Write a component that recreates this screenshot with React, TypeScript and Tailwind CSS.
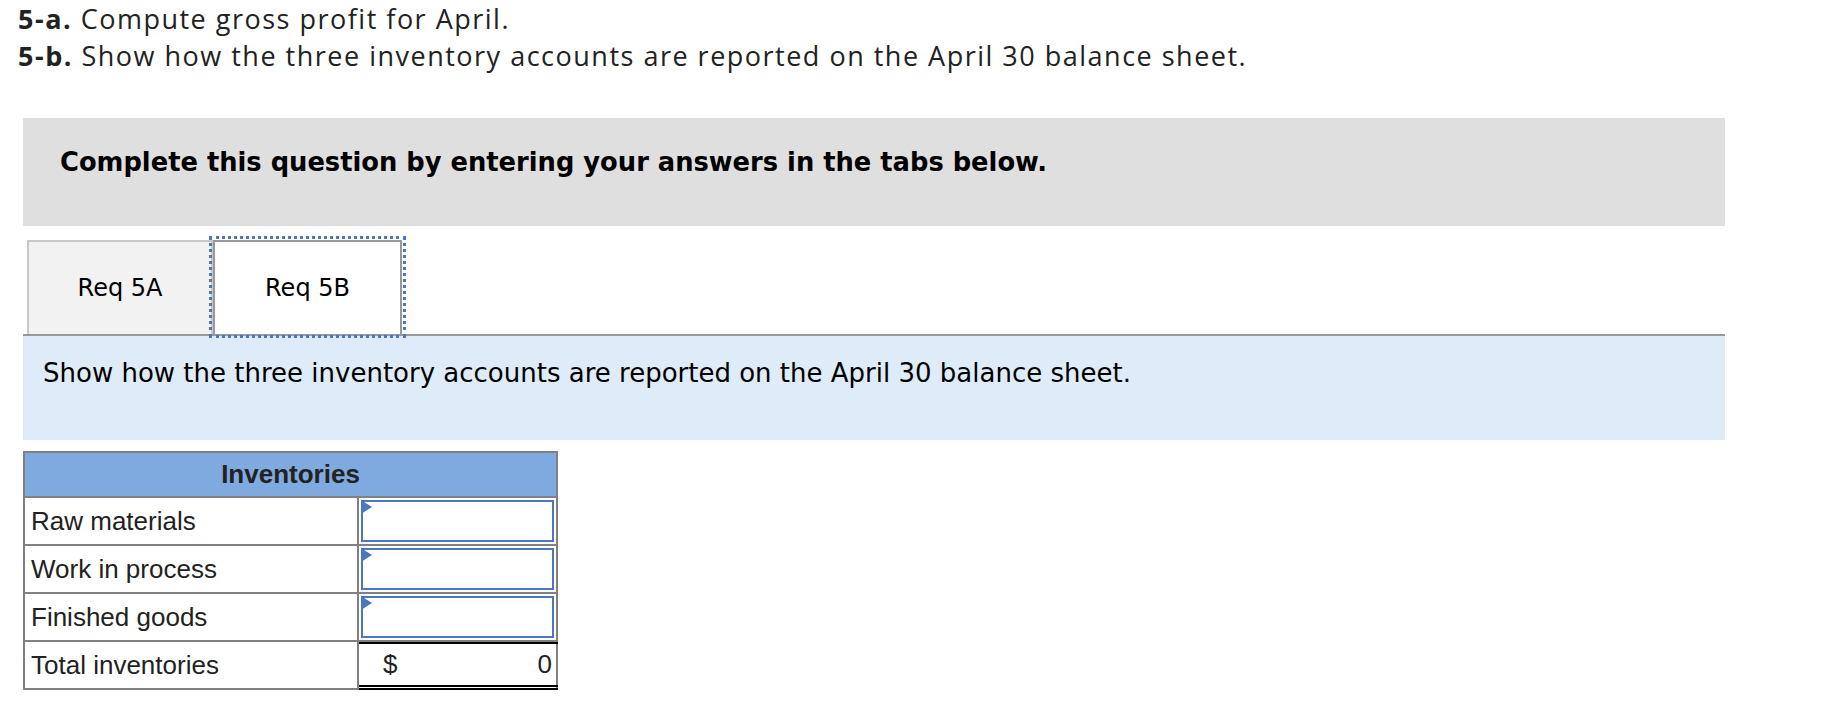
import React from "react";

const gray = "border-[#808080]";

function InputCell() {
  return (
    <div className="relative h-full p-[2px] bg-white">
      <div className="h-full w-full border-2 border-[#4a78c0] bg-white" />
      <div className="absolute left-[2px] top-[2px] w-0 h-0 border-y-[7px] border-y-transparent border-l-[11px] border-l-[#4a78c0]" />
    </div>
  );
}

export default function App() {
  const rows = ["Raw materials", "Work in process", "Finished goods"];
  return (
    <div className="w-[1832px] h-[705px] bg-white overflow-hidden">
      <div className="pl-[18px] pt-0 text-[27px] leading-[37px] tracking-[1.5px] text-[#222] font-['Open_Sans',sans-serif]">
        <div>
          <span className="font-bold">5-a.</span> Compute gross profit for April.
        </div>
        <div>
          <span className="font-bold">5-b.</span> Show how the three inventory accounts are reported on the April 30 balance sheet.
        </div>
      </div>

      <div className="ml-[23px] mt-[44px] w-[1702px] h-[108px] bg-[#dfdfdf] pt-[28px] pl-[37px]">
        <span className="font-['DejaVu_Sans',sans-serif] font-bold text-[25.75px] leading-[32px] text-black">
          Complete this question by entering your answers in the tabs below.
        </span>
      </div>

      <div className="ml-[23px] mt-[14px] w-[1702px] flex items-end border-b-2 border-[#999]">
        <div className="ml-[4px] w-[186px] h-[94px] bg-[#f2f2f2] border-2 border-b-0 border-[#c8c8c8] flex items-center justify-center font-['DejaVu_Sans',sans-serif] text-[24px] text-black">
          Req 5A
        </div>
        <div className="w-[189px] h-[94px] bg-white border-2 border-b-0 border-[#999] outline-[3px] outline-dotted outline-offset-[1px] outline-[#4a78c0] flex items-center justify-center font-['DejaVu_Sans',sans-serif] text-[24px] text-black">
          Req 5B
        </div>
      </div>

      <div className="ml-[23px] w-[1702px] h-[104px] bg-[#deebf8] pt-[20px] pl-[20px]">
        <span className="font-['DejaVu_Sans',sans-serif] text-[26px] leading-[34px] text-black">
          Show how the three inventory accounts are reported on the April 30 balance sheet.
        </span>
      </div>

      <div className={`ml-[23px] mt-[11px] w-[535px] border-2 border-b-0 ${gray} font-['Liberation_Sans',Arial,sans-serif] text-[#222]`}>
        <div className={`h-[45px] bg-[#7faadf] border-b-2 ${gray} flex items-center justify-center font-bold text-[26px]`}>
          Inventories
        </div>
        {rows.map((r) => (
          <div key={r} className={`grid grid-cols-[334px_1fr] h-[48px] border-b-2 ${gray}`}>
            <div className={`border-r-2 ${gray} pl-[6px] flex items-center text-[26px]`}>{r}</div>
            <InputCell />
          </div>
        ))}
        <div className="grid grid-cols-[334px_1fr] h-[48px]">
          <div className={`border-r-2 border-b-2 ${gray} pl-[6px] flex items-center text-[26px]`}>Total inventories</div>
          <div className="border-t-2 border-black border-b-[5px] border-double flex items-center justify-between pl-[24px] pr-[6px] text-[26px] -mr-[2px]">
            <span>$</span>
            <span>0</span>
          </div>
        </div>
      </div>
    </div>
  );
}
